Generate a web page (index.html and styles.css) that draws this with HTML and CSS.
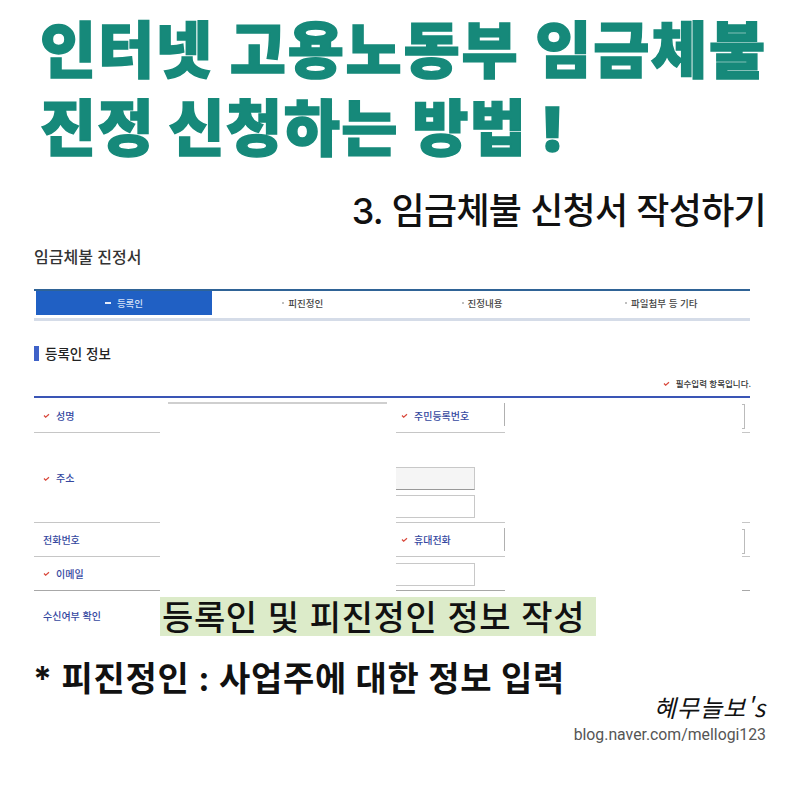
FILE: index.html
```html
<!DOCTYPE html>
<html lang="ko">
<head>
    <meta charset="UTF-8">
    <meta name="viewport" content="width=device-width, initial-scale=1.0">
    <title>임금체불 진정 신청하는 방법</title>
    <link rel="stylesheet" href="styles.css">
</head>
<body>
    <div class="page">
        <h1 class="title">
            <span class="title-line">인터넷 고용노동부 임금체불</span>
            <span class="title-line second">진정 신청하는 방법 !</span>
        </h1>
        <h2 class="subtitle">3. 임금체불 신청서 작성하기</h2>

        <div class="form-shot">
            <h3 class="form-name">임금체불 진정서</h3>

            <div class="tabs">
                <div class="tab active"><span class="tab-dash"></span>등록인</div>
                <div class="tab"><span class="tab-dot"></span>피진정인</div>
                <div class="tab"><span class="tab-dot"></span>진정내용</div>
                <div class="tab"><span class="tab-dot"></span>파일첨부 등 기타</div>
            </div>

            <div class="section-head">등록인 정보</div>
            <div class="required-note"><svg class="check" viewBox="0 0 8 6"><path d="M1 3l2 2 4-3.500"/></svg>필수입력 항목입니다.</div>

            <div class="form-grid">
                <!-- 성명 / 주민등록번호 -->
                <div class="label line"><svg class="check" viewBox="0 0 8 6"><path d="M1 3l2 2 4-3.500"/></svg>성명</div>
                <div class="blank"><div class="name-line"></div></div>
                <div class="label line divider"><svg class="check" viewBox="0 0 8 6"><path d="M1 3l2 2 4-3.500"/></svg>주민등록번호</div>
                <div class="blank"></div>
                <div class="stub line bracket"></div>

                <!-- 주소 -->
                <div class="label line address-label"><svg class="check" viewBox="0 0 8 6"><path d="M1 3l2 2 4-3.500"/></svg>주소</div>
                <div class="blank"></div>
                <div class="address-inputs line">
                    <div class="input filled"></div>
                    <div class="input"></div>
                </div>
                <div class="blank"></div>
                <div class="stub line"></div>

                <!-- 전화번호 / 휴대전화 -->
                <div class="label line">전화번호</div>
                <div class="blank"></div>
                <div class="label line divider"><svg class="check" viewBox="0 0 8 6"><path d="M1 3l2 2 4-3.500"/></svg>휴대전화</div>
                <div class="blank"></div>
                <div class="stub line bracket"></div>

                <!-- 이메일 -->
                <div class="label line dark"><svg class="check" viewBox="0 0 8 6"><path d="M1 3l2 2 4-3.500"/></svg>이메일</div>
                <div class="blank"></div>
                <div class="email-cell line dark"><div class="input"></div></div>
                <div class="blank"></div>
                <div class="stub line dark"></div>

                <!-- 수신여부 확인 -->
                <div class="label receive">수신여부 확인</div>
            </div>

            <div class="highlight">등록인 및 피진정인 정보 작성</div>
        </div>

        <p class="footnote">* 피진정인 : 사업주에 대한 정보 입력</p>

        <div class="credit">
            <div class="signature">혜무늘보's</div>
            <div class="blog-url">blog.naver.com/mellogi123</div>
        </div>
    </div>
</body>
</html>
```

FILE: styles.css
```css
* {
    box-sizing: border-box;
}

body {
    margin: 0;
    background: #fff;
    font-family: "Noto Sans CJK KR", "Noto Sans", sans-serif;
}

.page {
    width: 800px;
    height: 800px;
    overflow: hidden;
    padding-top: 12px;
}

.title {
    margin: 0;
    padding-left: 40px;
    color: #16897a;
    font-family: Inter, "Noto Sans CJK KR", sans-serif;
    font-size: 61px;
    font-weight: 900;
    letter-spacing: 1.800px;
    word-spacing: 2px;
    -webkit-text-stroke: 1.500px #16897a;
    white-space: nowrap;
}

.title-line {
    display: block;
    height: 78px;
    line-height: 78px;
}

.title-line.second {
    letter-spacing: 1.400px;
    word-spacing: 0;
}

.subtitle {
    margin: 21px 0 0;
    height: 44px;
    padding-right: 34px;
    text-align: right;
    color: #111;
    font-family: Inter, "Noto Sans CJK KR", sans-serif;
    font-size: 36px;
    font-weight: 500;
    line-height: 44px;
    letter-spacing: -0.700px;
}

.form-shot {
    position: relative;
    padding: 0 50px 0 34px;
}

.form-name {
    margin: 10px 0 20px;
    height: 26px;
    color: #333;
    font-size: 16px;
    font-weight: 500;
    line-height: 26px;
}

.tabs {
    display: grid;
    grid-template-columns: 176px repeat(3, 1fr);
    height: 32px;
    padding: 0 0 3px 2px;
    border-top: 2px solid #2f6396;
    border-bottom: 3px solid #d5dce8;
}

.tab {
    display: flex;
    align-items: center;
    justify-content: center;
    padding-left: 2px;
    color: #444;
    font-size: 9.500px;
    font-weight: 500;
}

.tab.active {
    padding-left: 0;
    background: #2060c4;
    color: #d5e2f7;
}

.tab-dash {
    width: 6px;
    height: 2px;
    margin-right: 6px;
    background: #e4ecfa;
}

.tab-dot {
    width: 2px;
    height: 2px;
    margin-right: 4px;
    border-radius: 50%;
    background: #aaa;
}

.section-head {
    margin-top: 25px;
    height: 15px;
    padding-left: 6px;
    border-left: 5px solid #3f62c8;
    color: #222;
    font-size: 13.500px;
    font-weight: 500;
    line-height: 15px;
}

.required-note {
    display: flex;
    align-items: center;
    justify-content: flex-end;
    height: 14px;
    margin-top: 15px;
    margin-right: -1px;
    color: #333;
    font-size: 8.500px;
    font-weight: 500;
}

.check {
    width: 7px;
    height: 5px;
    margin-right: 6px;
    flex: none;
    fill: none;
    stroke: #d9483b;
    stroke-width: 1.500;
}

.form-grid {
    display: grid;
    grid-template-columns: 126px 236px 109px 237px 8px;
    grid-template-rows: 35px 90px 34px 34px 48px;
    margin-top: 6px;
    border-top: 2px solid #3a55b5;
}

.line {
    border-bottom: 1px solid #c6c6c6;
}

.line.dark {
    border-bottom-color: #a8a8a8;
}

.label {
    display: flex;
    align-items: center;
    padding-left: 9px;
    color: #35489f;
    font-size: 10px;
    font-weight: 500;
}

.divider {
    position: relative;
    padding-left: 5px;
}

.divider::after {
    content: "";
    position: absolute;
    top: 5px;
    right: 0;
    width: 1px;
    height: 23px;
    background: #b0b0b0;
}

.name-line {
    width: 219px;
    height: 2px;
    margin: 4px 0 0 8px;
    background: #cfcfcf;
}

.address-label {
    align-items: flex-start;
    padding-top: 37px;
}

.address-label .check {
    margin-top: 6px;
}

.address-inputs {
    display: flex;
    flex-direction: column;
    gap: 5px;
    padding-top: 34px;
}

.input {
    width: 79px;
    height: 23px;
    border: 1px solid #c8c8c8;
    border-left: none;
    background: #fff;
}

.input.filled {
    background: #f5f5f5;
    border-bottom-color: #999;
}

.email-cell {
    padding-top: 6px;
}

.stub {
    position: relative;
}

.bracket::before {
    content: "";
    position: absolute;
    top: 6px;
    left: 0;
    width: 2px;
    height: 23px;
    border: 1px solid #bbb;
    border-left: none;
}

/* caption pasted over the form screenshot */
.highlight {
    position: absolute;
    left: 160px;
    top: 354px;
    width: 436px;
    height: 39px;
    padding-left: 2px;
    background: #dcebc9;
    color: #111;
    font-size: 34px;
    font-weight: 500;
    line-height: 38px;
    letter-spacing: 0.600px;
    white-space: nowrap;
}

.footnote {
    margin: 20px 0 0;
    padding-left: 33px;
    color: #111;
    font-family: Inter, "Noto Sans CJK KR", sans-serif;
    font-size: 34px;
    font-weight: 700;
    line-height: 40px;
    letter-spacing: 0.700px;
    white-space: nowrap;
}

.credit {
    margin-top: -5px;
    padding-right: 34px;
    text-align: right;
}

.signature {
    height: 31px;
    color: #111;
    font-size: 24px;
    font-weight: 400;
    line-height: 26px;
    font-style: italic;
    letter-spacing: 1px;
}

.blog-url {
    color: #555;
    font-family: Roboto, "Liberation Sans", sans-serif;
    font-size: 15.800px;
    line-height: 20px;
}
```
